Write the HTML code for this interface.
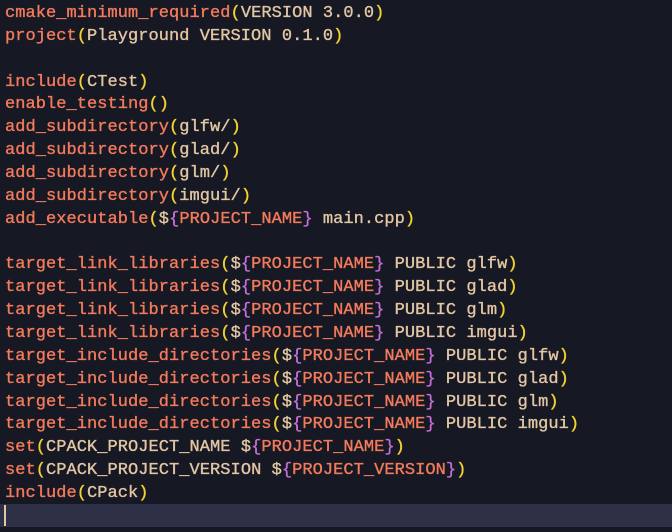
<!DOCTYPE html>
<html><head><meta charset="utf-8"><style>
html,body{margin:0;padding:0;background:#161923;width:672px;height:532px;overflow:hidden}
pre{margin:0;padding:3px 0 0 5px;font-family:"Liberation Mono",monospace;font-weight:normal;font-size:17px;line-height:22.86px;color:#e3c6a4;letter-spacing:0.05px;-webkit-text-stroke:0.35px currentColor}
.f{color:#f47a5c}.p{color:#f5d230}.b{color:#c46fd8}.v{color:#f47a5c}
.hl{position:absolute;left:0;top:504px;width:672px;height:23px;background:#2d3047}
.cur{position:absolute;left:4px;top:505px;width:2px;height:21px;background:#e3c6a4}
</style></head><body>
<div class="hl"></div><div class="cur"></div>
<pre style="position:relative"><span class="f">cmake_minimum_required</span><span class="p">(</span>VERSION 3.0.0<span class="p">)</span>
<span class="f">project</span><span class="p">(</span>Playground VERSION 0.1.0<span class="p">)</span>

<span class="f">include</span><span class="p">(</span>CTest<span class="p">)</span>
<span class="f">enable_testing</span><span class="p">()</span>
<span class="f">add_subdirectory</span><span class="p">(</span>glfw/<span class="p">)</span>
<span class="f">add_subdirectory</span><span class="p">(</span>glad/<span class="p">)</span>
<span class="f">add_subdirectory</span><span class="p">(</span>glm/<span class="p">)</span>
<span class="f">add_subdirectory</span><span class="p">(</span>imgui/<span class="p">)</span>
<span class="f">add_executable</span><span class="p">(</span>$<span class="b">{</span><span class="v">PROJECT_NAME</span><span class="b">}</span> main.cpp<span class="p">)</span>

<span class="f">target_link_libraries</span><span class="p">(</span>$<span class="b">{</span><span class="v">PROJECT_NAME</span><span class="b">}</span> PUBLIC glfw<span class="p">)</span>
<span class="f">target_link_libraries</span><span class="p">(</span>$<span class="b">{</span><span class="v">PROJECT_NAME</span><span class="b">}</span> PUBLIC glad<span class="p">)</span>
<span class="f">target_link_libraries</span><span class="p">(</span>$<span class="b">{</span><span class="v">PROJECT_NAME</span><span class="b">}</span> PUBLIC glm<span class="p">)</span>
<span class="f">target_link_libraries</span><span class="p">(</span>$<span class="b">{</span><span class="v">PROJECT_NAME</span><span class="b">}</span> PUBLIC imgui<span class="p">)</span>
<span class="f">target_include_directories</span><span class="p">(</span>$<span class="b">{</span><span class="v">PROJECT_NAME</span><span class="b">}</span> PUBLIC glfw<span class="p">)</span>
<span class="f">target_include_directories</span><span class="p">(</span>$<span class="b">{</span><span class="v">PROJECT_NAME</span><span class="b">}</span> PUBLIC glad<span class="p">)</span>
<span class="f">target_include_directories</span><span class="p">(</span>$<span class="b">{</span><span class="v">PROJECT_NAME</span><span class="b">}</span> PUBLIC glm<span class="p">)</span>
<span class="f">target_include_directories</span><span class="p">(</span>$<span class="b">{</span><span class="v">PROJECT_NAME</span><span class="b">}</span> PUBLIC imgui<span class="p">)</span>
<span class="f">set</span><span class="p">(</span>CPACK_PROJECT_NAME $<span class="b">{</span><span class="v">PROJECT_NAME</span><span class="b">}</span><span class="p">)</span>
<span class="f">set</span><span class="p">(</span>CPACK_PROJECT_VERSION $<span class="b">{</span><span class="v">PROJECT_VERSION</span><span class="b">}</span><span class="p">)</span>
<span class="f">include</span><span class="p">(</span>CPack<span class="p">)</span>
</pre>
</body></html>
